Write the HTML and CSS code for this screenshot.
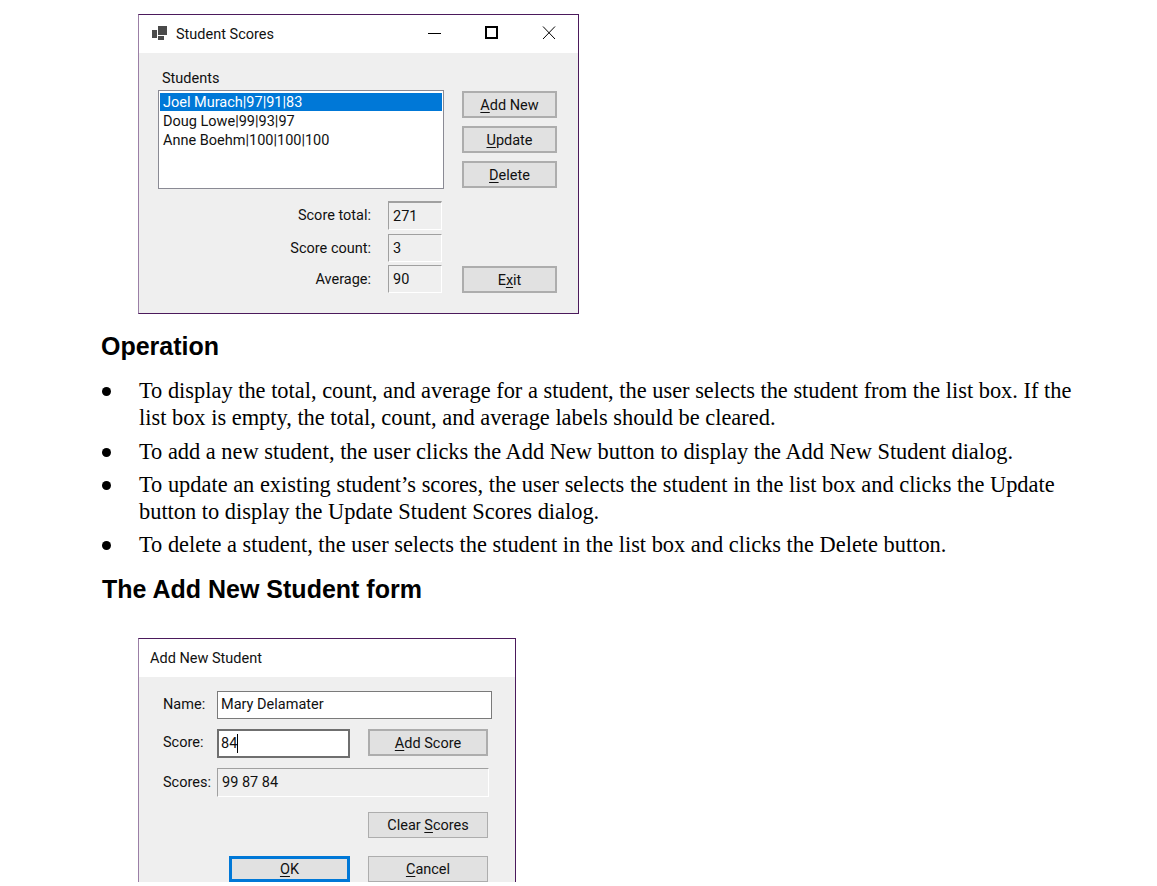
FILE: index.html
```html
<!DOCTYPE html>
<html lang="en">
<head>
<meta charset="utf-8">
<title>Student Scores</title>
<link rel="stylesheet" href="styles.css">
</head>
<body>
<main class="page">
  <section class="win win-scores">
    <header class="titlebar">
      <svg class="app-icon" width="16" height="16" viewBox="0 0 16 16"><path fill="#4a4a4a" d="M1 5h5v8H1zM7 1h9v9H7zM7 11h6v4H7z"/></svg>
      <span class="title">Student Scores</span>
      <div class="controls">
        <svg width="14" height="14" viewBox="0 0 14 14"><path stroke="#000" d="M0 7.500h13"/></svg>
        <svg width="14" height="14" viewBox="0 0 14 14"><path fill="none" stroke="#000" stroke-width="2" d="M1 1h11v11H1z"/></svg>
        <svg width="14" height="14" viewBox="0 0 14 14"><path fill="none" stroke="#000" d="M1 .5l12 12.500M13 .5L1 13"/></svg>
      </div>
    </header>
    <div class="body scores-body">
      <div class="top-row">
        <div class="list-col">
          <div class="label">Students</div>
          <ul class="listbox">
            <li class="selected">Joel Murach|97|91|83</li>
            <li>Doug Lowe|99|93|97</li>
            <li>Anne Boehm|100|100|100</li>
          </ul>
        </div>
        <div class="btn-col">
          <button class="btn"><u>A</u>dd New</button>
          <button class="btn"><u>U</u>pdate</button>
          <button class="btn"><u>D</u>elete</button>
        </div>
      </div>
      <div class="stats">
        <span class="stat-label">Score total:</span><output class="readout readout-first">271</output><span></span>
        <span class="stat-label">Score count:</span><output class="readout">3</output><span></span>
        <span class="stat-label">Average:</span><output class="readout">90</output><button class="btn">E<u>x</u>it</button>
      </div>
    </div>
  </section>

  <h2 class="heading heading-op">Operation</h2>
  <ul class="bullets">
    <li><span>To display the total, count, and average for a student, the user selects the student from the list box. If the<br>list box is empty, the total, count, and average labels should be cleared.</span></li>
    <li><span>To add a new student, the user clicks the Add New button to display the Add New Student dialog.</span></li>
    <li><span>To update an existing student’s scores, the user selects the student in the list box and clicks the Update<br>button to display the Update Student Scores dialog.</span></li>
    <li><span>To delete a student, the user selects the student in the list box and clicks the Delete button.</span></li>
  </ul>
  <h2 class="heading heading-form">The Add New Student form</h2>

  <section class="win win-add">
    <header class="titlebar titlebar-add"><span class="title">Add New Student</span></header>
    <div class="body add-body">
      <div class="add-row row-name">
        <span class="add-label">Name:</span>
        <div class="input input-name">Mary Delamater</div>
      </div>
      <div class="add-row row-score">
        <span class="add-label">Score:</span>
        <div class="input input-score">84<i class="caret"></i></div>
        <button class="btn btn-wide"><u>A</u>dd Score</button>
      </div>
      <div class="add-row row-scores">
        <span class="add-label">Scores:</span>
        <output class="readout readout-wide">99 87 84</output>
      </div>
      <div class="add-row row-clear">
        <button class="btn btn-wide btn-thin">Clear <u>S</u>cores</button>
      </div>
      <div class="add-row row-ok">
        <button class="btn btn-ok"><u>O</u>K</button>
        <button class="btn btn-wide btn-thin"><u>C</u>ancel</button>
      </div>
    </div>
  </section>
</main>
</body>
</html>
```
FILE: styles.css
```css
* { box-sizing: border-box; }
html, body { margin: 0; padding: 0; background: #fff; }
body { height: 886px; overflow: hidden; }
.page { padding: 14px 0 0 101px; width: 1157px; color: #000; }

.win {
  margin-left: 37px;
  border: 1px solid #4b1a5c;
  border-left-color: #9b7fa6;
  font-family: Roboto, sans-serif;
  font-size: 14.500px;
  color: #111;
}
.win-scores { width: 441px; height: 300px; }
.win-add { width: 378px; height: 244px; margin-top: 34px; border-bottom: 0; }

.titlebar { height: 38px; background: #fff; display: flex; align-items: center; padding: 0 0 2px 12px; }
.titlebar-add { padding-left: 11px; }
.title { padding-top: 2px; }
.app-icon { margin-right: 9px; }
.controls { margin-left: auto; display: flex; gap: 43px; padding-right: 22px; }
.controls svg { display: block; }
.body { background: #efefef; }

.scores-body { height: 260px; padding: 16px 21px 0 19px; }
.top-row { display: flex; justify-content: space-between; }
.label { margin-left: 4px; line-height: 20px; height: 20px; }
.listbox {
  list-style: none;
  margin: 1px 0 0;
  padding: 2px 1px;
  width: 286px;
  height: 99px;
  background: #fff;
  border: 1px solid #8a8a94;
}
.listbox li { height: 19px; line-height: 20px; padding-left: 3px; }
.listbox .selected { background: #0078d7; color: #fff; height: 18px; margin-bottom: 1px; }
.btn-col { display: flex; flex-direction: column; gap: 8px; padding-top: 22px; }

.btn {
  display: block;
  width: 95px;
  height: 27px;
  padding: 2px 0 0;
  background: #e1e1e1;
  border: 2px solid #adadad;
  font: inherit;
  color: #111;
}
.btn u { text-underline-offset: 2px; }

.stats {
  display: grid;
  grid-template-columns: 213px 54px 95px;
  column-gap: 17px;
  margin-top: 12px;
  grid-template-rows: 33px 31px 28px;
}
.stats .btn { margin-left: 3px; align-self: end; }
.stat-label { text-align: right; line-height: 30px; }
.readout {
  display: block;
  height: 28px;
  border: 1px solid #fff;
  border-top-color: #a0a0a0;
  border-left-color: #a0a0a0;
  padding-left: 4px;
  line-height: 28px;
}
.readout-first { height: 29px; border-top-width: 2px; line-height: 27px; }

.add-body { height: 205px; padding: 14px 0 0 24px; }
.add-row { display: flex; align-items: flex-start; }
.add-label { width: 54px; line-height: 28px; }
.input { background: #fff; border: 1px solid #7a7a7a; padding-left: 3px; line-height: 26px; }
.input-name { width: 275px; height: 28px; }
.row-score { padding-top: 10px; }
.input-score { width: 133px; height: 29px; border: 2px solid #6f6f6f; padding-left: 2px; display: flex; align-items: center; }
.caret { display: inline-block; width: 1px; height: 19px; background: #000; }
.btn-wide { width: 120px; margin-left: 18px; }
.row-scores { padding-top: 10px; }
.row-scores .add-label { height: 29px; line-height: 30px; }
.readout-wide { width: 272px; height: 29px; }
.row-clear { padding-top: 15px; padding-left: 205px; }
.btn-thin { height: 26px; padding: 0; border-width: 1px; }
.row-clear .btn-wide { margin-left: 0; }
.row-ok { padding-top: 18px; padding-left: 66px; }
.btn-ok { width: 121px; height: 26px; padding: 0; border: 3px solid #0078d7; }

.heading { font-family: "Liberation Sans", sans-serif; font-weight: bold; font-size: 25px; line-height: 30px; margin: 0; }
.heading-op { margin-top: 17px; }
.heading-form { margin-top: 16px; margin-left: 1px; }

.bullets {
  list-style: none;
  margin: 16px 0 0;
  padding: 0;
  font-family: "Liberation Serif", serif;
  font-size: 22.400px;
  line-height: 27px;
  white-space: nowrap;
}
.bullets li { display: flex; align-items: flex-start; margin-bottom: 6px; }
.bullets li:first-child { margin-bottom: 7px; }
.bullets li::before {
  content: "";
  flex: none;
  width: 9px;
  height: 9px;
  border-radius: 50%;
  background: #000;
  margin: 10px 28px 0 1px;
}
```
